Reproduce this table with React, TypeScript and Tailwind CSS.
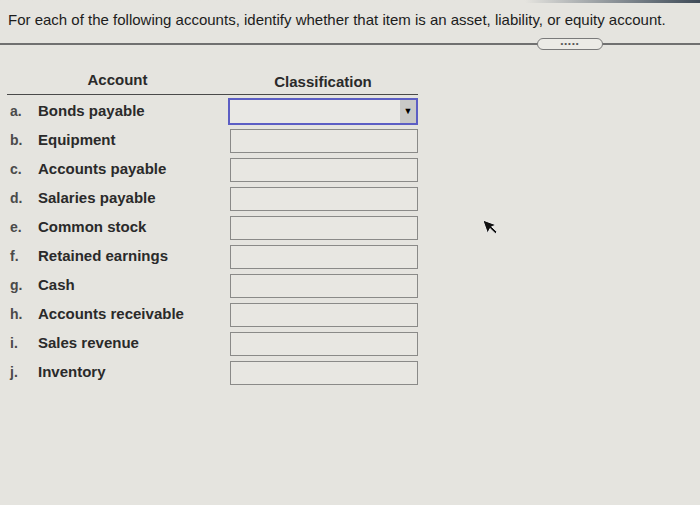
import React from "react";

const ROWS = [
  { k: "a.", name: "Bonds payable" },
  { k: "b.", name: "Equipment" },
  { k: "c.", name: "Accounts payable" },
  { k: "d.", name: "Salaries payable" },
  { k: "e.", name: "Common stock" },
  { k: "f.", name: "Retained earnings" },
  { k: "g.", name: "Cash" },
  { k: "h.", name: "Accounts receivable" },
  { k: "i.", name: "Sales revenue" },
  { k: "j.", name: "Inventory" },
];

export default function App() {
  return (
    <div className="relative w-[700px] h-[505px] overflow-hidden bg-[#e5e4df] font-['Liberation_Sans',Arial,sans-serif] text-[#262626]">
      {/* top edge strip */}
      <div className="h-[3px] bg-gradient-to-r from-[#e5e4df] from-75% to-[#3f4b58]" />

      <p className="pl-[8px] pt-[8px] text-[15px] leading-[18px] text-[#1c1c1c]">
        For each of the following accounts, identify whether that item is an asset, liability, or equity account.
      </p>

      {/* divider with collapse pill */}
      <div className="relative mt-[14px] h-[2px] bg-[#707070]">
        <div className="absolute left-[537px] -top-[5px] w-[66px] h-[12px] rounded-full border-[1.5px] border-[#7a7a7a] bg-[#ecebe6] flex items-center justify-center">
          <span className="text-[8px] leading-none tracking-[1px] text-[#555]">•••••</span>
        </div>
      </div>

      {/* table */}
      <div className="ml-[7px] mt-[26px] w-[411px]">
        <div className="flex border-b border-[#4a4a4a] pb-[3px] text-[15px] leading-[18px] font-bold text-[#2a2a2a]">
          <div className="w-[221px] text-center">Account</div>
          <div className="flex-1 pt-[2px] text-center">Classification</div>
        </div>

        <div className="mt-[2px] flex flex-col">
          {ROWS.map((r, i) => (
            <div key={r.k} className="flex h-[29px] items-center">
              <div className="flex w-[221px] items-center text-[15px] font-bold">
                <span className="w-[31px] pl-[3px] text-[14px] text-[#4a4a4a]">{r.k}</span>
                <span className="text-[#2a2a2a]">{r.name}</span>
              </div>
              {i === 0 ? (
                <div className="flex h-[27px] flex-1 items-stretch border-2 border-[#5c5ec4] bg-[#e9e8e4]">
                  <div className="flex-1" />
                  <div className="flex w-[16px] items-center justify-center bg-[#c9c9c7] text-[9px] text-black">▼</div>
                </div>
              ) : (
                <div className="ml-[2px] h-[24px] flex-1 border-[1.5px] border-[#8a8a88] bg-[#e8e7e2]" />
              )}
            </div>
          ))}
        </div>
      </div>

      {/* mouse pointer */}
      <svg className="absolute left-[484px] top-[216px]" width="16" height="20" viewBox="0 0 14 18">
        <path d="M1 1 L1 14 L4.5 10.5 L7.5 16.5 L9.5 15.5 L6.5 9.5 L11 9.5 Z" fill="#111" stroke="#f2f2f2" strokeWidth="0.8" transform="rotate(-20 7 9)" />
      </svg>
    </div>
  );
}
